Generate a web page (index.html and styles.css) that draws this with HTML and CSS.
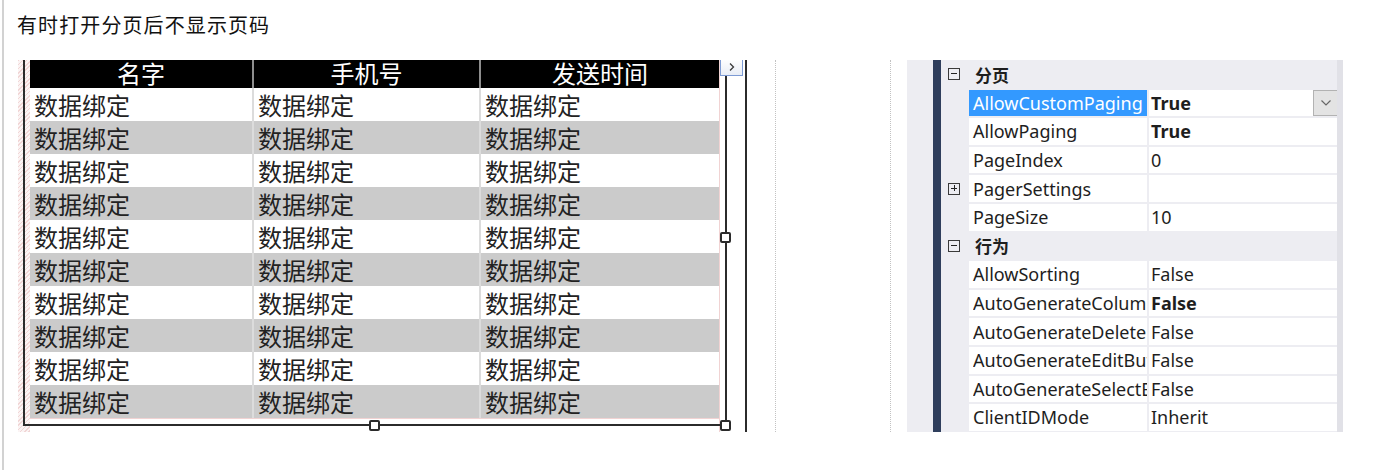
FILE: index.html
```html
<!DOCTYPE html>
<html lang="zh-CN">
<head>
<meta charset="utf-8">
<title>有时打开分页后不显示页码</title>
<link rel="stylesheet" href="styles.css">
</head>
<body>
<div class="post">
  <p class="title">有时打开分页后不显示页码</p>
  <div class="shot">
    <div class="designer">
      <div class="hatch"></div>
      <div class="grid">
        <div class="row head"><div class="c">名字</div><div class="c">手机号</div><div class="c">发送时间</div></div>
        <div class="row"><div class="c">数据绑定</div><div class="c">数据绑定</div><div class="c">数据绑定</div></div>
        <div class="row alt"><div class="c">数据绑定</div><div class="c">数据绑定</div><div class="c">数据绑定</div></div>
        <div class="row"><div class="c">数据绑定</div><div class="c">数据绑定</div><div class="c">数据绑定</div></div>
        <div class="row alt"><div class="c">数据绑定</div><div class="c">数据绑定</div><div class="c">数据绑定</div></div>
        <div class="row"><div class="c">数据绑定</div><div class="c">数据绑定</div><div class="c">数据绑定</div></div>
        <div class="row alt"><div class="c">数据绑定</div><div class="c">数据绑定</div><div class="c">数据绑定</div></div>
        <div class="row"><div class="c">数据绑定</div><div class="c">数据绑定</div><div class="c">数据绑定</div></div>
        <div class="row alt"><div class="c">数据绑定</div><div class="c">数据绑定</div><div class="c">数据绑定</div></div>
        <div class="row"><div class="c">数据绑定</div><div class="c">数据绑定</div><div class="c">数据绑定</div></div>
        <div class="row alt"><div class="c">数据绑定</div><div class="c">数据绑定</div><div class="c">数据绑定</div></div>
      </div>
      <div class="gutter">
        <span class="pager-btn"><svg width="9" height="10" viewBox="0 0 9 10"><path d="M3 1.5 L6.5 5 L3 8.5" fill="none" stroke="#3a3a3a" stroke-width="1.3"/></svg></span>
      </div>
      <div class="frame"></div>
      <span class="handle h-mid"></span>
      <span class="handle h-corner"></span>
      <span class="handle h-right"></span>
    </div>
    <div class="spacer">
      <div class="dots a"></div>
      <div class="dots b"></div>
    </div>
    <div class="props">
      <div class="bar"></div>
      <div class="plist">
        <div class="prow cat"><span class="tog minus"></span><span class="label">分页</span></div>
        <div class="prow"><span></span><span class="n sel">AllowCustomPaging</span><span class="v drop"><b>True</b><span class="dd"><svg width="12" height="8" viewBox="0 0 12 8"><path d="M1.5 1.5 L6 6 L10.5 1.5" fill="none" stroke="#666" stroke-width="1.2"/></svg></span></span></div>
        <div class="prow"><span></span><span class="n">AllowPaging</span><span class="v"><b>True</b></span></div>
        <div class="prow"><span></span><span class="n">PageIndex</span><span class="v">0</span></div>
        <div class="prow"><span class="tog plus"></span><span class="n">PagerSettings</span><span class="v"></span></div>
        <div class="prow"><span></span><span class="n">PageSize</span><span class="v">10</span></div>
        <div class="prow cat"><span class="tog minus"></span><span class="label">行为</span></div>
        <div class="prow"><span></span><span class="n">AllowSorting</span><span class="v">False</span></div>
        <div class="prow"><span></span><span class="n"><span class="clip">AutoGenerateColumns</span></span><span class="v"><b>False</b></span></div>
        <div class="prow"><span></span><span class="n"><span class="clip">AutoGenerateDeleteButton</span></span><span class="v">False</span></div>
        <div class="prow"><span></span><span class="n"><span class="clip">AutoGenerateEditButton</span></span><span class="v">False</span></div>
        <div class="prow"><span></span><span class="n"><span class="clip">AutoGenerateSelectButton</span></span><span class="v">False</span></div>
        <div class="prow"><span></span><span class="n">ClientIDMode</span><span class="v">Inherit</span></div>
      </div>
      <div class="edge"></div>
    </div>
  </div>
</div>
</body>
</html>
```

FILE: styles.css
```css
* { box-sizing: border-box; }
html, body { margin: 0; background: #fff; }
body { font-family: "Noto Sans", "Noto Sans CJK SC", sans-serif; }

.post {
  margin-left: 2px;
  border-left: 2px solid #d2d2d2;
  min-height: 470px;
  padding: 12px 0 0 13px;
}
.title {
  margin: 0 0 22px;
  font: 20px/26px "Noto Sans CJK SC", sans-serif;
  letter-spacing: 1.1px;
  color: #111;
}

.shot {
  display: flex;
  width: 1325px;
  height: 372px;
  margin-left: 1px;
  overflow: hidden;
}

/* ---------- designer surface ---------- */
.designer {
  position: relative;
  display: flex;
  width: 729px;
  height: 100%;
  background: #fff;
}
.hatch {
  width: 12px;
  height: 100%;
  background: repeating-linear-gradient(135deg, #f1d6d6 0 1px, #fbf4f4 1px 3px);
}
.grid {
  width: 689px;
  align-self: flex-start;
  border-bottom: 1px solid #f1d3d3;
  font: 24px/33px "Noto Sans CJK SC", sans-serif;
  color: #222;
}
.row {
  display: grid;
  grid-template-columns: 224px 227px 238px;
  height: 33px;
}
.row.alt { background: #cbcbcb; }
.row .c {
  padding-left: 4px;
  border-right: 2px solid #dcdcdc;
  overflow: hidden;
  white-space: nowrap;
}
.row .c:last-child { border-right: 0; }
.row.head {
  background: #000;
  color: #fff;
  height: 28px;
  line-height: 26px;
}
.row.head .c {
  text-align: center;
  padding-left: 0;
  overflow: visible;
  border-right-color: #8e8e8e;
}
.gutter {
  position: relative;
  width: 28px;
  height: 100%;
  border-left: 1px solid #f1d3d3;
  border-right: 2px solid #2b2b2b;
}
.pager-btn {
  position: absolute;
  left: 0;
  top: -2px;
  width: 23px;
  height: 18px;
  border: 1px solid #7d9bd4;
  background: linear-gradient(#ffffff, #e8edf6);
  display: flex;
  align-items: center;
  justify-content: center;
  z-index: 2;
}
.pager-btn svg { display: block; }
.frame {
  position: absolute;
  left: 5px;
  top: -10px;
  width: 704px;
  height: 376px;
  border: 2px solid #2b2b2b;
  pointer-events: none;
}
.handle {
  position: absolute;
  width: 11px;
  height: 11px;
  background: #fff;
  border: 2px solid #2b2b2b;
  border-radius: 2px;
  z-index: 3;
}
.h-mid { left: 351px; top: 360px; }
.h-corner { left: 702px; top: 360px; }
.h-right { left: 702px; top: 172px; }

/* ---------- gap with dotted guides ---------- */
.spacer {
  display: flex;
  width: 160px;
  height: 100%;
}
.dots {
  width: 0;
  height: 100%;
  border-left: 1px dotted #c2c2c2;
}
.dots.a { margin-left: 28px; }
.dots.b { margin-left: 114px; }

/* ---------- property grid ---------- */
.props {
  display: flex;
  width: 436px;
  height: 100%;
  padding-left: 26px;
  background: #ededf2;
}
.bar { width: 8px; background: #2f3e5c; }
.edge { width: 6px; background: #e1e1e7; }
.plist {
  width: 396px;
  font-family: "Noto Sans", sans-serif;
  font-size: 18px;
  color: #1e1e1e;
}
.prow {
  display: grid;
  grid-template-columns: 26px 178px 190px;
  column-gap: 2px;
  height: 28.6px;
}
.prow .n, .prow .v {
  display: flex;
  align-items: center;
  margin: 1px 0;
  background: #fff;
  white-space: nowrap;
  overflow: hidden;
}
.prow .n { padding-left: 4px; }
.prow .v { padding-left: 2px; }
.clip {
  display: block;
  width: 100%;
  overflow: hidden;
  white-space: nowrap;
}
.prow .n.sel { background: #3399ff; color: #fff; }
.prow .v.drop { justify-content: space-between; }
.dd {
  width: 25px;
  height: 100%;
  border: 1px solid #b2b2b2;
  background: #e3e3e3;
  display: flex;
  align-items: center;
  justify-content: center;
  margin-right: 1px;
}
.dd svg { display: block; }
.cat .label {
  grid-column: 2 / 4;
  display: flex;
  align-items: center;
  padding-left: 6px;
  font-weight: bold;
  font-size: 17px;
  font-family: "Noto Sans CJK SC", sans-serif;
}
.tog {
  position: relative;
  align-self: center;
  justify-self: start;
  margin-left: 7px;
  width: 12px;
  height: 12px;
  border: 1px solid #3a3a3a;
}
.tog::before {
  content: "";
  position: absolute;
  left: 2px;
  top: 4px;
  width: 6px;
  height: 1px;
  background: #222;
}
.tog.plus::after {
  content: "";
  position: absolute;
  left: 4.5px;
  top: 1.5px;
  width: 1px;
  height: 6px;
  background: #222;
}
```
